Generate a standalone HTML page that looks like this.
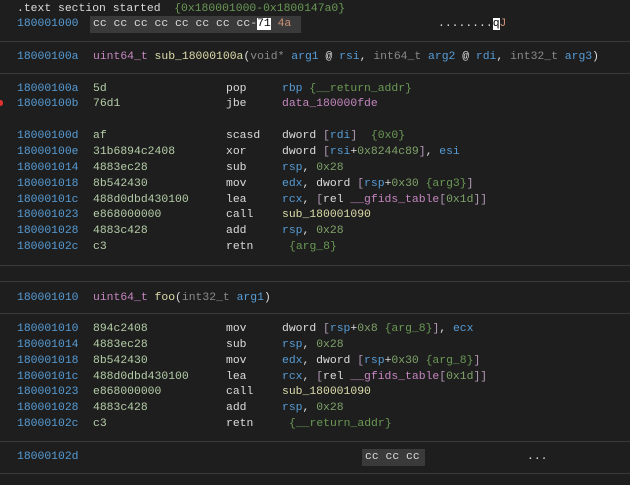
<!DOCTYPE html>
<html><head><meta charset="utf-8"><style>
html,body{margin:0;padding:0;background:#1e1e1e;width:630px;height:485px;overflow:hidden}
body{position:relative;font-family:"Liberation Mono",monospace;font-size:11.4px;color:#dcdcdc}
.l{position:absolute;left:0;height:16px;line-height:16px;white-space:pre}
.l span{position:absolute;top:0}
.l span span{position:static}
.a{color:#569cd6}.b{color:#b5cea8}.r{color:#569cd6}.n{color:#7fa36a}.g{color:#6a9955}.t{color:#c586c0}.p{color:#b59ab8}.gr{color:#8a8a8a}.y{color:#dcdcaa}.o{color:#ce9178}
.sep{position:absolute;left:0;width:630px;height:1px;background:#3a3a3a}
</style></head><body>
<div class="l" style="top:1px"><span style="left:17px">.text section started  <span class="g">{0x180001000-0x1800147a0}</span></span></div>
<div class="l" style="top:16px"><span class="a" style="left:17px">180001000</span></div>
<div style="position:absolute;left:90px;top:16px;width:211px;height:17px;background:#3a3a3a"></div>
<div class="l" style="top:16px"><span style="left:93px">cc cc cc cc cc cc cc cc-<span style="background:#fff;color:#000">71</span> <span class="o">4a</span></span></div>
<div class="l" style="top:16px"><span style="left:438px">........<span style="background:#fff;color:#000">q</span><span class="o">J</span></span></div>
<div class="sep" style="top:41px"></div>
<div class="l" style="top:49px"><span class="a" style="left:17px">18000100a</span><span style="left:93px"><span class="t">uint64_t</span> <span class="y">sub_18000100a</span>(<span class="gr">void*</span> <span class="r">arg1</span> @ <span class="r">rsi</span>, <span class="gr">int64_t</span> <span class="r">arg2</span> @ <span class="r">rdi</span>, <span class="gr">int32_t</span> <span class="r">arg3</span>)</span></div>
<div class="sep" style="top:73px"></div>
<div style="position:absolute;left:-2px;top:100px;width:5px;height:6px;border-radius:3px;background:#e03030"></div>

<div class="l" style="top:81px"><span class="a" style="left:17px">18000100a</span><span class="b" style="left:93px">5d</span><span style="left:226px">pop</span><span style="left:282px"><span class="r">rbp</span> <span class="g">{__return_addr}</span></span></div>
<div class="l" style="top:96px"><span class="a" style="left:17px">18000100b</span><span class="b" style="left:93px">76d1</span><span style="left:226px">jbe</span><span class="t" style="left:282px">data_180000fde</span></div>

<div class="l" style="top:128px"><span class="a" style="left:17px">18000100d</span><span class="b" style="left:93px">af</span><span style="left:226px">scasd</span><span style="left:282px">dword <span class="p">[</span><span class="r">rdi</span><span class="p">]</span>  <span class="g">{0x0}</span></span></div>
<div class="l" style="top:144px"><span class="a" style="left:17px">18000100e</span><span class="b" style="left:93px">31b6894c2408</span><span style="left:226px">xor</span><span style="left:282px">dword <span class="p">[</span><span class="r">rsi</span>+<span class="n">0x8244c89</span><span class="p">]</span>, <span class="r">esi</span></span></div>
<div class="l" style="top:160px"><span class="a" style="left:17px">180001014</span><span class="b" style="left:93px">4883ec28</span><span style="left:226px">sub</span><span style="left:282px"><span class="r">rsp</span>, <span class="n">0x28</span></span></div>
<div class="l" style="top:176px"><span class="a" style="left:17px">180001018</span><span class="b" style="left:93px">8b542430</span><span style="left:226px">mov</span><span style="left:282px"><span class="r">edx</span>, dword <span class="p">[</span><span class="r">rsp</span>+<span class="n">0x30</span> <span class="g">{arg3}</span><span class="p">]</span></span></div>
<div class="l" style="top:192px"><span class="a" style="left:17px">18000101c</span><span class="b" style="left:93px">488d0dbd430100</span><span style="left:226px">lea</span><span style="left:282px"><span class="r">rcx</span>, <span class="p">[</span>rel <span class="t">__gfids_table</span><span class="p">[</span><span class="n">0x1d</span><span class="p">]]</span></span></div>
<div class="l" style="top:207px"><span class="a" style="left:17px">180001023</span><span class="b" style="left:93px">e868000000</span><span style="left:226px">call</span><span class="y" style="left:282px">sub_180001090</span></div>
<div class="l" style="top:223px"><span class="a" style="left:17px">180001028</span><span class="b" style="left:93px">4883c428</span><span style="left:226px">add</span><span style="left:282px"><span class="r">rsp</span>, <span class="n">0x28</span></span></div>
<div class="l" style="top:239px"><span class="a" style="left:17px">18000102c</span><span class="b" style="left:93px">c3</span><span style="left:226px">retn</span><span class="g" style="left:289px">{arg_8}</span></div>
<div class="sep" style="top:265px"></div>
<div class="sep" style="top:281px"></div>
<div class="l" style="top:290px"><span class="a" style="left:17px">180001010</span><span style="left:93px"><span class="t">uint64_t</span> <span class="y">foo</span>(<span class="gr">int32_t</span> <span class="r">arg1</span>)</span></div>
<div class="sep" style="top:313px"></div>
<div class="l" style="top:321px"><span class="a" style="left:17px">180001010</span><span class="b" style="left:93px">894c2408</span><span style="left:226px">mov</span><span style="left:282px">dword <span class="p">[</span><span class="r">rsp</span>+<span class="n">0x8</span> <span class="g">{arg_8}</span><span class="p">]</span>, <span class="r">ecx</span></span></div>
<div class="l" style="top:337px"><span class="a" style="left:17px">180001014</span><span class="b" style="left:93px">4883ec28</span><span style="left:226px">sub</span><span style="left:282px"><span class="r">rsp</span>, <span class="n">0x28</span></span></div>
<div class="l" style="top:353px"><span class="a" style="left:17px">180001018</span><span class="b" style="left:93px">8b542430</span><span style="left:226px">mov</span><span style="left:282px"><span class="r">edx</span>, dword <span class="p">[</span><span class="r">rsp</span>+<span class="n">0x30</span> <span class="g">{arg_8}</span><span class="p">]</span></span></div>
<div class="l" style="top:369px"><span class="a" style="left:17px">18000101c</span><span class="b" style="left:93px">488d0dbd430100</span><span style="left:226px">lea</span><span style="left:282px"><span class="r">rcx</span>, <span class="p">[</span>rel <span class="t">__gfids_table</span><span class="p">[</span><span class="n">0x1d</span><span class="p">]]</span></span></div>
<div class="l" style="top:384px"><span class="a" style="left:17px">180001023</span><span class="b" style="left:93px">e868000000</span><span style="left:226px">call</span><span class="y" style="left:282px">sub_180001090</span></div>
<div class="l" style="top:400px"><span class="a" style="left:17px">180001028</span><span class="b" style="left:93px">4883c428</span><span style="left:226px">add</span><span style="left:282px"><span class="r">rsp</span>, <span class="n">0x28</span></span></div>
<div class="l" style="top:416px"><span class="a" style="left:17px">18000102c</span><span class="b" style="left:93px">c3</span><span style="left:226px">retn</span><span class="g" style="left:289px">{__return_addr}</span></div>
<div class="sep" style="top:441px"></div>
<div style="position:absolute;left:362px;top:449px;width:63px;height:17px;background:#3a3a3a"></div>
<div class="l" style="top:449px"><span class="a" style="left:17px">18000102d</span><span style="left:365px">cc cc cc</span><span style="left:527px">...</span></div>
<div class="sep" style="top:473px"></div>
</body></html>
